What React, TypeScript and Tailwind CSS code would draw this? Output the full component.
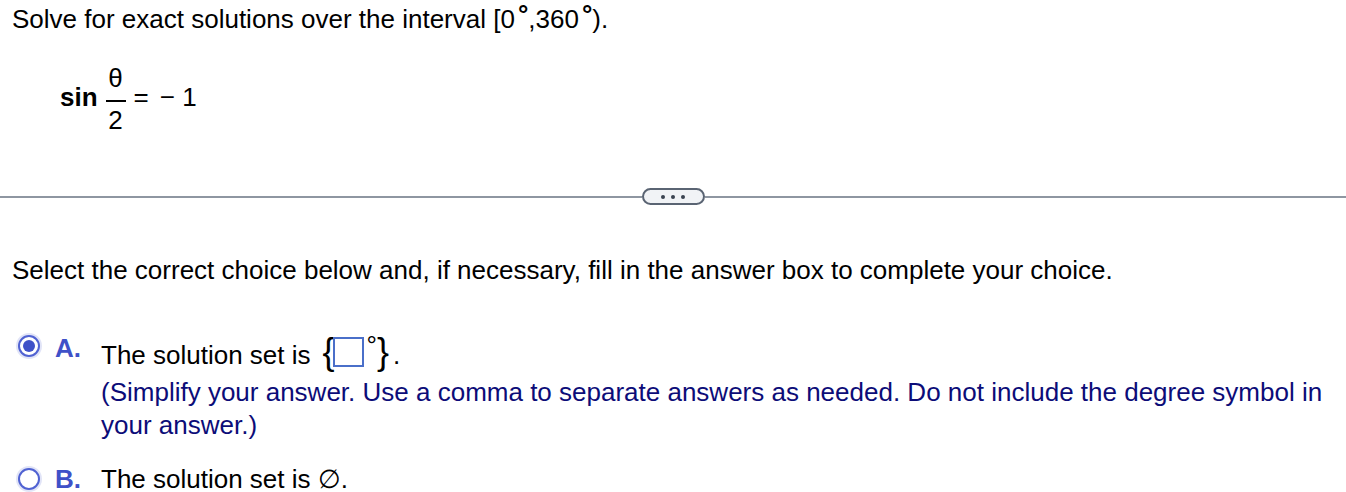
function Radio({ checked }: { checked: boolean }) {
    return (
        <span className="flex h-[26px] w-[26px] items-center justify-center rounded-full bg-[#e1e4f7]">
            <span className="flex h-[22px] w-[22px] items-center justify-center rounded-full border-2 border-[#5062d2] bg-white">
                {checked && <span className="h-[12px] w-[12px] rounded-full bg-[#3f51c8]" />}
            </span>
        </span>
    );
}

export default function App() {
    return (
        <div className="min-h-[492px] bg-white text-[26px] leading-[30px] text-black font-['Liberation_Sans',Arial,sans-serif]">
            <div className="px-3 pt-[4px]">
                <p>
                    Solve for exact solutions over the interval [0
                    <span className="relative -top-[5px] ml-[3px] font-bold">°</span>,360
                    <span className="relative -top-[5px] ml-[3px] font-bold">°</span>).
                </p>

                <div className="mt-[31px] ml-[48px] flex items-center leading-none">
                    <span className="mb-[5px] font-bold">sin</span>
                    <span className="ml-[8px] flex w-[20px] flex-col items-center">
                        <span>θ</span>
                        <span className="mt-[9px] h-[2px] w-[20px] bg-black" />
                        <span className="mt-[5px]">2</span>
                    </span>
                    <span className="mb-[5px] ml-[8px]">=</span>
                    <span className="mb-[5px] ml-[11px]">− 1</span>
                </div>
            </div>

            <div className="mt-[55px] flex items-center">
                <div className="h-[2px] flex-1 bg-[#8e96a1]" />
                <button className="flex h-[17px] w-[63px] items-center justify-center gap-[6px] rounded-full border-2 border-[#5a6473] bg-[#f1f3f6]">
                    <span className="h-[4px] w-[4px] rounded-full bg-[#3a4350]" />
                    <span className="h-[4px] w-[4px] rounded-full bg-[#3a4350]" />
                    <span className="h-[4px] w-[4px] rounded-full bg-[#3a4350]" />
                </button>
                <div className="h-[2px] flex-1 bg-[#8e96a1]" />
            </div>

            <div className="px-3">
                <p className="mt-[50px]">
                    Select the correct choice below and, if necessary, fill in the answer box to complete your choice.
                </p>

                <div className="mt-[48px] flex items-start">
                    <span className="ml-[4px]">
                        <Radio checked />
                    </span>
                    <span className="ml-[13px] font-bold text-[#3f51c8]">A.</span>
                    <div className="ml-[20px] flex-1">
                        <div className="flex h-[37px] items-end">
                            <span>The solution set is</span>
                            <span className="ml-[12px] flex h-[37px] items-center">
                                <span className="text-[36px] leading-[37px]">{"{"}</span>
                                <span className="-ml-[2px] h-[30px] w-[31px] border-2 border-[#4a6fc9]" />
                                <span className="ml-[3px] self-start leading-[24px]">°</span>
                                <span className="text-[36px] leading-[37px]">{"}"}</span>
                            </span>
                            <span className="ml-[4px]">.</span>
                        </div>
                        <p className="mt-[6px] leading-[33px] text-[#0c0c78]">
                            (Simplify your answer. Use a comma to separate answers as needed. Do not include the degree symbol in your answer.)
                        </p>
                    </div>
                </div>

                <div className="mt-[22px] flex items-center">
                    <span className="ml-[4px]">
                        <Radio checked={false} />
                    </span>
                    <span className="ml-[13px] font-bold text-[#3f51c8]">B.</span>
                    <span className="ml-[20px]">The solution set is ∅.</span>
                </div>
            </div>
        </div>
    );
}
